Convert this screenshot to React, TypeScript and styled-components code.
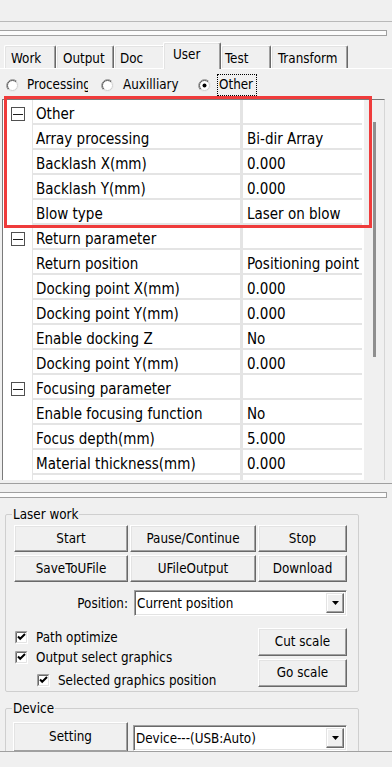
import React from "react";
import styled, { createGlobalStyle, css } from "styled-components";

const FONT = `"DejaVu Sans Condensed", "Liberation Sans", "Noto Sans", sans-serif`;

const GlobalStyle = createGlobalStyle`
  * { box-sizing: border-box; }
  html, body { margin: 0; padding: 0; background: #f0f0f0; }
  body { font-family: ${FONT}; font-size: 13.33px; color: #000; }
`;

const Page = styled.div`
  width: 392px;
  height: 767px;
  overflow: hidden;
  background: #f0f0f0;
  display: flex;
  flex-direction: column;
`;

const TopArea = styled.div`
  flex: none;
  height: 22px;
  border-bottom: 1px solid #b9b9b9;
`;

const Splitter = styled.div<{ $gap: number }>`
  flex: none;
  width: 387px;
  height: 6px;
  margin-top: ${(p) => p.$gap}px;
  border-top: 1px solid #a0a0a0;
  border-bottom: 1px solid #a0a0a0;
  border-right: 1px solid #a0a0a0;
  background: #fcfcfc;
`;

const TabStrip = styled.div`
  flex: none;
  display: flex;
  align-items: flex-end;
  height: 26px;
  margin-top: 6px;
  padding-left: 4px;
  position: relative;
  z-index: 1;
`;

const Tab = styled.div<{ $w: number; $pad: number; $active?: boolean }>`
  flex: none;
  width: ${(p) => p.$w}px;
  height: 23px;
  padding: 5px 0 0 ${(p) => p.$pad}px;
  line-height: 16px;
  white-space: nowrap;
  background: #f0f0f0;
  border-top: 1px solid #fff;
  border-left: 1px solid #fff;
  border-right: 1px solid #696969;
  box-shadow: inset -1px 0 #a0a0a0, inset 1px 1px #e3e3e3;
  border-radius: 2px 2px 0 0;
  ${(p) =>
    p.$active &&
    css`
      height: 27px;
      margin-left: -2px;
      margin-bottom: -1px;
      padding-top: 4px;
      position: relative;
      z-index: 2;
    `}
`;

const TabPage = styled.div`
  flex: none;
  border-top: 1px solid #fff;
  padding-top: 5px;
`;

const RadioRow = styled.div`
  display: flex;
  align-items: center;
  height: 22px;
`;

const RadioItem = styled.div<{ $w: number; $ml: number }>`
  flex: none;
  display: flex;
  align-items: center;
  width: ${(p) => p.$w}px;
  margin-left: ${(p) => p.$ml}px;
  overflow: hidden;
  white-space: nowrap;
`;

const RadioLabel = styled.span<{ $gap: number; $focus?: boolean }>`
  margin-left: ${(p) => p.$gap}px;
  line-height: 16px;
  ${(p) =>
    p.$focus &&
    css`
      border: 1px dotted #000;
      padding: 2px 3px 2px 1px;
    `}
`;

const GridBox = styled.div`
  position: relative;
  flex: none;
  display: flex;
  margin: 3px 0 0 2px;
  width: 383px;
  height: 381px;
  border-top: 1px solid #7a7a7a;
  border-left: 1px solid #7a7a7a;
  border-right: 1px solid #d6d6d6;
`;

const GridBody = styled.div`
  width: 361px;
  height: 380px;
  overflow: hidden;
  background: #fff;
`;

const ScrollTrack = styled.div`
  width: 20px;
  height: 380px;
  background: #f0f0f0;
  padding: 22px 0 0 9px;
`;

const ScrollThumb = styled.div`
  width: 3px;
  height: 235px;
  background: #8f8f8f;
`;

const Row = styled.div`
  display: flex;
  height: 25px;
  background: #fff;
`;

const Gutter = styled.div`
  flex: none;
  width: 29px;
  display: flex;
  justify-content: center;
  padding-top: 7px;
`;

const Expander = styled.div`
  width: 14px;
  height: 14px;
  border: 1px solid #505050;
  display: flex;
  align-items: center;
  justify-content: center;
`;

const ExpanderBar = styled.span`
  width: 10px;
  height: 1px;
  background: #1e1e1e;
`;

const Cells = styled.div`
  flex: none;
  display: grid;
  grid-template-columns: 207px 119px;
  column-gap: 3px;
  padding: 0 0 2px 1px;
  background: #e4e4e4;
  height: 25px;
`;

const Cell = styled.div<{ $pad: number }>`
  background: #fff;
  height: 23px;
  padding: 6px 0 0 ${(p) => p.$pad}px;
  font-size: 15px;
  line-height: 17px;
  white-space: nowrap;
  overflow: hidden;
`;

const Highlight = styled.div`
  position: absolute;
  left: 1px;
  top: -4px;
  width: 368px;
  height: 132px;
  border: 3px solid #ef3b3b;
  pointer-events: none;
`;

const Divider = styled.div`
  flex: none;
  height: 1px;
  margin-top: 3px;
  background: #a0a0a0;
`;

const LowerPanel = styled.div`
  flex: none;
  height: 253px;
  overflow: hidden;
  padding-top: 9px;
`;

const Group = styled.fieldset<{ $gap: number; $pt: number }>`
  margin: ${(p) => p.$gap}px 0 0 5px;
  width: 354px;
  min-width: 0;
  padding: ${(p) => p.$pt}px 11px 1px 8px;
  border: 1px solid #cfcfcf;
  border-radius: 2px;
`;

const GroupLabel = styled.legend`
  padding: 0 1px;
  margin-left: -2px;
  line-height: 15px;
`;

const ButtonGrid = styled.div`
  display: grid;
  grid-template-columns: 114px 126px 89px;
  grid-auto-rows: 27px;
  column-gap: 2px;
  row-gap: 3px;
`;

const Btn = styled.button<{ $h?: number; $w?: number }>`
  font-family: ${FONT};
  font-size: 13.33px;
  color: #000;
  height: ${(p) => p.$h ?? 27}px;
  ${(p) => p.$w && css`width: ${p.$w}px; flex: none;`}
  padding: 0;
  background: #f0f0f0;
  border: 1px solid;
  border-color: #fff #696969 #696969 #fff;
  box-shadow: inset -1px -1px #a0a0a0, inset 1px 1px #e3e3e3;
  line-height: 16px;
  white-space: nowrap;
`;

const PositionRow = styled.div`
  display: grid;
  grid-template-columns: 114px 213px;
  column-gap: 6px;
  align-items: center;
  height: 26px;
  margin-top: 8px;
`;

const PosLabel = styled.div`
  text-align: right;
  line-height: 16px;
  padding-top: 1px;
`;

const Combo = styled.div<{ $h: number }>`
  display: flex;
  height: ${(p) => p.$h}px;
  padding: 2px;
  background: #fff;
  border: 1px solid;
  border-color: #a0a0a0 #fff #fff #a0a0a0;
  box-shadow: inset 1px 1px #696969, inset -1px -1px #e3e3e3;
`;

const ComboText = styled.div`
  flex: 1;
  padding-top: 1px;
  line-height: 19px;
  white-space: nowrap;
  overflow: hidden;
`;

const ComboArrow = styled.div`
  flex: none;
  width: 18px;
  background: #f0f0f0;
  border: 1px solid;
  border-color: #e3e3e3 #696969 #696969 #e3e3e3;
  box-shadow: inset -1px -1px #a0a0a0, inset 1px 1px #fff;
  display: flex;
  align-items: center;
  justify-content: center;
`;

const BottomArea = styled.div`
  display: flex;
  justify-content: space-between;
  margin-top: 12px;
  height: 62px;
`;

const CheckCol = styled.div`
  display: flex;
  flex-direction: column;
  padding-left: 1px;
`;

const CheckRow = styled.div<{ $indent?: number; $gap?: number }>`
  display: flex;
  align-items: center;
  height: 20px;
  margin-left: ${(p) => p.$indent ?? 0}px;
  margin-top: ${(p) => p.$gap ?? 0}px;
`;

const CheckLabel = styled.span`
  margin-left: 8px;
  line-height: 16px;
  padding-top: 1px;
  white-space: nowrap;
`;

const ScaleCol = styled.div`
  display: flex;
  flex-direction: column;
  gap: 3px;
  width: 89px;
`;

const DeviceRow = styled.div`
  display: flex;
  align-items: flex-start;
  margin-left: -1px;
`;

const DeviceCombo = styled(Combo)`
  width: 215px;
  margin: 3px 0 0 5px;
`;

const StatusBar = styled.div`
  flex: none;
  height: 16px;
  border-top: 1px solid #a0a0a0;
`;

const RadioGlyph: React.FC<{ checked?: boolean }> = ({ checked }) => (
  <svg width="13" height="13" viewBox="0 0 13 13" style={{ flex: "none" }}>
    <circle cx="6.5" cy="6.5" r="6" fill="#fff" />
    <path d="M2.26 10.74 A6 6 0 0 1 10.74 2.26" fill="none" stroke="#8c8c8c" strokeWidth="1" />
    <path d="M10.74 2.26 A6 6 0 0 1 2.26 10.74" fill="none" stroke="#e6e6e6" strokeWidth="1" />
    <path d="M2.96 10.04 A5 5 0 0 1 10.04 2.96" fill="none" stroke="#5a5a5a" strokeWidth="1" />
    <path d="M10.04 2.96 A5 5 0 0 1 2.96 10.04" fill="none" stroke="#cfcfcf" strokeWidth="1" />
    {checked && <circle cx="6.5" cy="6.5" r="2" fill="#000" />}
  </svg>
);

const CheckGlyph: React.FC = () => (
  <svg width="13" height="13" viewBox="0 0 13 13" style={{ flex: "none" }}>
    <rect x="0" y="0" width="13" height="13" fill="#fff" />
    <path d="M0.5 12.5 V0.5 H12.5" fill="none" stroke="#a0a0a0" />
    <path d="M0.5 12.5 H12.5 V0.5" fill="none" stroke="#fff" />
    <path d="M1.5 11.5 V1.5 H11.5" fill="none" stroke="#696969" />
    <path d="M1.5 11.5 H11.5 V1.5" fill="none" stroke="#e3e3e3" />
    <path d="M3 5.5 L5.2 7.8 L10 3" fill="none" stroke="#000" strokeWidth="2" />
  </svg>
);

const DownTriangle: React.FC = () => (
  <svg width="7" height="4" viewBox="0 0 7 4">
    <polygon points="0,0 7,0 3.5,4" fill="#000" />
  </svg>
);

type GridRow = { name: string; value?: string; category?: boolean };

const rows: GridRow[] = [
  { name: "Other", category: true },
  { name: "Array processing", value: "Bi-dir Array" },
  { name: "Backlash X(mm)", value: "0.000" },
  { name: "Backlash Y(mm)", value: "0.000" },
  { name: "Blow type", value: "Laser on blow" },
  { name: "Return parameter", category: true },
  { name: "Return position", value: "Positioning point" },
  { name: "Docking point X(mm)", value: "0.000" },
  { name: "Docking point Y(mm)", value: "0.000" },
  { name: "Enable docking Z", value: "No" },
  { name: "Docking point Y(mm)", value: "0.000" },
  { name: "Focusing parameter", category: true },
  { name: "Enable focusing function", value: "No" },
  { name: "Focus depth(mm)", value: "5.000" },
  { name: "Material thickness(mm)", value: "0.000" },
  { name: "" },
];

const tabs = [
  { label: "Work", w: 52, pad: 6 },
  { label: "Output", w: 58, pad: 6 },
  { label: "Doc", w: 51, pad: 5 },
  { label: "User", w: 58, pad: 9, active: true },
  { label: "Test", w: 50, pad: 3 },
  { label: "Transform", w: 77, pad: 6 },
];

export default function App() {
  return (
    <>
      <GlobalStyle />
      <Page>
        <TopArea />
        <Splitter $gap={8} />
        <TabStrip>
          {tabs.map((t) => (
            <Tab key={t.label} $w={t.w} $pad={t.pad} $active={t.active}>
              {t.label}
            </Tab>
          ))}
        </TabStrip>
        <TabPage>
          <RadioRow>
            <RadioItem $w={82} $ml={6}>
              <RadioGlyph />
              <RadioLabel $gap={8}>Processing</RadioLabel>
            </RadioItem>
            <RadioItem $w={97} $ml={13}>
              <RadioGlyph />
              <RadioLabel $gap={9}>Auxilliary</RadioLabel>
            </RadioItem>
            <RadioItem $w={80} $ml={0}>
              <RadioGlyph checked />
              <RadioLabel $gap={6} $focus>
                Other
              </RadioLabel>
            </RadioItem>
          </RadioRow>
          <GridBox>
            <GridBody>
              {rows.map((r, i) => (
                <Row key={i}>
                  <Gutter>
                    {r.category && (
                      <Expander>
                        <ExpanderBar />
                      </Expander>
                    )}
                  </Gutter>
                  <Cells>
                    <Cell $pad={3}>{r.name}</Cell>
                    <Cell $pad={4}>{r.value ?? ""}</Cell>
                  </Cells>
                </Row>
              ))}
            </GridBody>
            <ScrollTrack>
              <ScrollThumb />
            </ScrollTrack>
            <Highlight />
          </GridBox>
        </TabPage>
        <Divider />
        <Splitter $gap={8} />
        <LowerPanel>
          <Group $gap={0} $pt={3}>
            <GroupLabel>Laser work</GroupLabel>
            <ButtonGrid>
              <Btn>Start</Btn>
              <Btn>Pause/Continue</Btn>
              <Btn>Stop</Btn>
              <Btn>SaveToUFile</Btn>
              <Btn>UFileOutput</Btn>
              <Btn>Download</Btn>
            </ButtonGrid>
            <PositionRow>
              <PosLabel>Position:</PosLabel>
              <Combo $h={26}>
                <ComboText>Current position</ComboText>
                <ComboArrow>
                  <DownTriangle />
                </ComboArrow>
              </Combo>
            </PositionRow>
            <BottomArea>
              <CheckCol>
                <CheckRow>
                  <CheckGlyph />
                  <CheckLabel>Path optimize</CheckLabel>
                </CheckRow>
                <CheckRow>
                  <CheckGlyph />
                  <CheckLabel>Output select graphics</CheckLabel>
                </CheckRow>
                <CheckRow $indent={22} $gap={3}>
                  <CheckGlyph />
                  <CheckLabel>Selected graphics position</CheckLabel>
                </CheckRow>
              </CheckCol>
              <ScaleCol>
                <Btn $h={28}>Cut scale</Btn>
                <Btn $h={28}>Go scale</Btn>
              </ScaleCol>
            </BottomArea>
          </Group>
          <Group $gap={9} $pt={6}>
            <GroupLabel>Device</GroupLabel>
            <DeviceRow>
              <Btn $h={30} $w={115}>
                Setting
              </Btn>
              <DeviceCombo $h={26}>
                <ComboText>Device---(USB:Auto)</ComboText>
                <ComboArrow>
                  <DownTriangle />
                </ComboArrow>
              </DeviceCombo>
            </DeviceRow>
          </Group>
        </LowerPanel>
        <StatusBar />
      </Page>
    </>
  );
}
